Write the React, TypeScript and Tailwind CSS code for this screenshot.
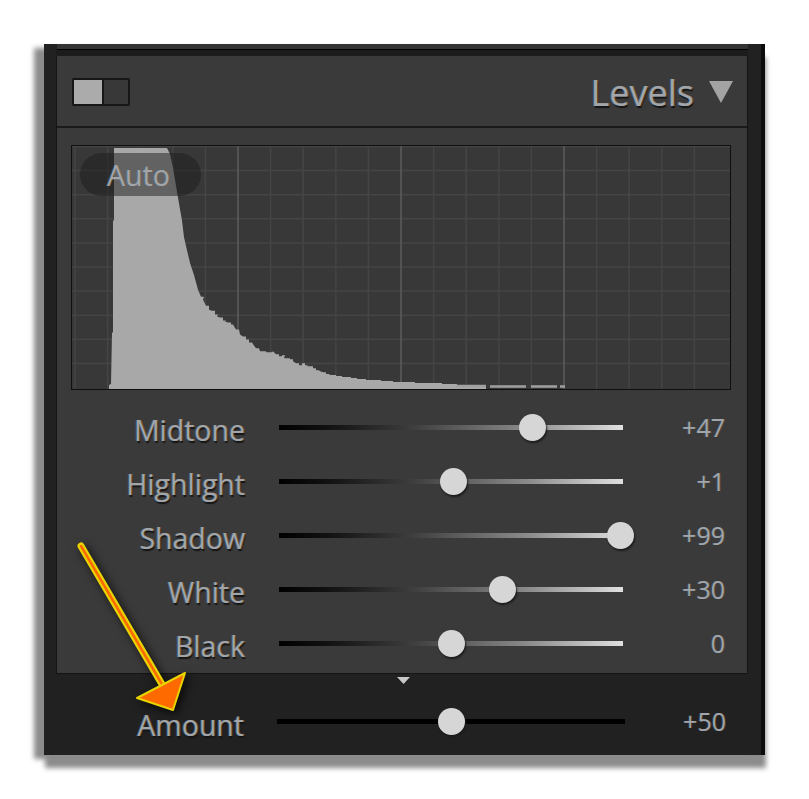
const sliders = [
    { label: "Midtone", value: "+47", pos: 253 },
    { label: "Highlight", value: "+1", pos: 174 },
    { label: "Shadow", value: "+99", pos: 341 },
    { label: "White", value: "+30", pos: 223 },
    { label: "Black", value: "0", pos: 172 },
]

// histogram outline, [x, y] inside the 658x245 box
const curve = [
    [95, 2], [98, 8], [101, 22], [104, 40], [107, 58], [110, 75],
    [112, 92], [115, 105], [118, 118], [122, 130], [126, 145], [131, 155], [137, 165], [145, 172], [153, 177],
    [161, 180], [168, 190], [181, 200], [188, 207], [201, 207], [212, 214], [221, 217], [235, 222], [248, 227],
    [258, 231], [273, 233], [288, 235], [300, 236], [328, 238], [384, 240],
]

function histogramPath() {
    let d = "M37 245 L37 241 L39 240 L40 188 L41 188 L41 75 L42 75 L42 2"
    for (let i = 1; i < curve.length; i++) {
        const [x0, y0] = curve[i - 1]
        const [x1, y1] = curve[i]
        d += ` L${x0} ${y0}`
        // little stair steps, the way a real histogram edge looks
        for (let x = x0 + 3; x < x1 - 1; x += 3) {
            const t = (x - x0) / (x1 - x0)
            const wobble = x < 260 ? (((x * 7) % 5) - 2) * 0.7 : 0
            const y = Math.round(y0 + (y1 - y0) * t + wobble)
            d += ` L${x} ${y} L${x + 3} ${y}`
        }
    }
    return d + " L385 241 L414 241 L414 245 Z"
}

const textFringe = "[text-shadow:-1px_0_0_rgba(70,130,190,0.45),1px_0_0_rgba(190,120,40,0.45),1px_2px_1px_#141414]"

function Slider({ label, value, pos, plain }: { label: string; value: string; pos: number; plain?: boolean }) {
    return (
        <div className="flex items-center h-[54px]">
            <div className={`w-[174px] shrink-0 text-right text-[28.5px] leading-none text-[#a2a6aa] ${textFringe} ${plain ? "mt-[8px]" : "mt-[6px]"}`}>{label}</div>
            <div className={`relative h-[5px] w-[344px] shrink-0 ${plain ? "ml-[33px] !w-[348px] bg-black" : "ml-[34px] bg-[linear-gradient(to_right,#000_0%,#111_14%,#3c3c3c_38%,#8a8a8a_72%,#e0e0e0_100%)]"}`}>
                <div className="absolute top-[-11px] w-[27px] h-[27px] rounded-full bg-[#d6d6d6] shadow-[1px_2px_2px_#1c1c1c]" style={{ left: pos - 13 }} />
            </div>
            <div className="flex-1 pr-[1px] text-right text-[25px] leading-none text-[#a0a6ac] [text-shadow:-1px_0_0_rgba(70,130,190,0.3),1px_0_0_rgba(190,120,40,0.3)]">{value}</div>
        </div>
    )
}

export default function App() {
    const minorX = Array.from({ length: 20 }, (_, i) => 3 + i * 32.6)
    const gridY = Array.from({ length: 10 }, (_, i) => 0.5 + i * 24.3)

    return (
        <div className="relative w-[809px] h-[799px] bg-white pl-[44px] pt-[44px] font-['Open_Sans',sans-serif]">
            <div className="w-[721px] h-[711px] flex flex-col bg-[#212121] border-r-[4px] border-[#0c0c0c] pl-[12px] pr-[13px] shadow-[-10px_4px_5px_#8c8c8c,1px_13px_5px_#8c8c8c]">
                <div className="h-[6px] shrink-0 ml-[1px] bg-[#343434] border-b-[1px] border-black" />
                <div className="h-[6px] shrink-0 bg-[#1c1c1c]" />

                <div className="h-[618px] shrink-0 bg-[#3a3a3a] border-l border-r border-b border-[#141414]">
                    <div className="h-[72px] flex items-center justify-between pl-[15px] pr-[14px] border-b-[2px] border-[#1a1a1a]">
                        <div className="flex w-[58px] h-[28px] border-[2px] border-[#161616] rounded-[2px] mt-[2px]">
                            <div className="w-[28px] bg-[#ababab]" />
                            <div className="flex-1 border-l-[2px] border-[#161616] bg-[#383838]" />
                        </div>
                        <div className="flex items-center gap-[15px]">
                            <span className={`text-[36px] leading-none mt-[3px] text-[#a2a6aa] ${textFringe}`}>Levels</span>
                            <svg width="24" height="22" viewBox="0 0 24 22" className="mt-[1px]">
                                <path d="M0 0 H24 L12 22 Z" fill="#a3a3a3" />
                            </svg>
                        </div>
                    </div>

                    <div className="relative w-[660px] h-[245px] mt-[17px] ml-[14px] border-[1px] border-[#0f0f0f] bg-[#383838]">
                        <svg className="w-full h-full blur-[0.5px]" viewBox="0 0 658 245" preserveAspectRatio="none">
                            {gridY.map((y) => (
                                <line key={y} x1="0" x2="658" y1={y} y2={y} stroke="#454545" strokeWidth="1.5" />
                            ))}
                            {minorX.map((x, i) => (
                                <line key={x} x1={x} x2={x} y1="0" y2="245" stroke={i % 5 === 0 && i > 0 ? "#5c5c5c" : "#454545"} strokeWidth="1.5" />
                            ))}
                            <path d={histogramPath()} fill="#a8a8a8" />
                            <path d="M384 242 H414 M418 242.5 H454 M459 242.5 H485 M488 242.5 H493" stroke="#a0a0a0" strokeWidth="2.5" />
                        </svg>
                        <div className="absolute left-[8px] top-[7px] w-[121px] h-[43px] rounded-full bg-[#1c1c1c]/50 flex items-center pl-[27px] pt-[2px] text-[28.5px] text-[#a2a6aa] [text-shadow:-1px_0_0_rgba(70,130,190,0.4),1px_0_0_rgba(190,120,40,0.3)]">Auto</div>
                    </div>

                    <div className="mt-[10px] pl-[14px] pr-[21px]">
                        {sliders.map((s) => (
                            <Slider key={s.label} label={s.label} value={s.value} pos={s.pos} />
                        ))}
                    </div>
                </div>

                <div className="flex-1 relative">
                    <div className="flex justify-center pt-[3px] pl-[3px]">
                        <svg width="13" height="7" viewBox="0 0 13 7">
                            <path d="M0 0 H13 L6.5 7 Z" fill="#c9c9c9" />
                        </svg>
                    </div>
                    <div className="mt-[10px] pl-[14px] pr-[21px]">
                        <Slider label="Amount" value="+50" pos={174} plain />
                    </div>
                </div>
            </div>

            {/* annotation arrow drawn over the panel */}
            <svg className="absolute left-0 top-0 pointer-events-none" width="809" height="799" viewBox="0 0 809 799">
                <g className="drop-shadow-[3px_3px_5px_rgba(0,0,0,0.75)]">
                    <line x1="81" y1="546" x2="163" y2="686" stroke="#e8d400" strokeWidth="7" strokeLinecap="round" />
                    <line x1="81" y1="546" x2="163" y2="686" stroke="#ff6a00" strokeWidth="2.5" strokeLinecap="round" />
                    <path d="M137 698 L185 673 L173 710 Z" fill="#ff6a00" stroke="#e8d400" strokeWidth="2" strokeLinejoin="round" />
                </g>
            </svg>
        </div>
    )
}
